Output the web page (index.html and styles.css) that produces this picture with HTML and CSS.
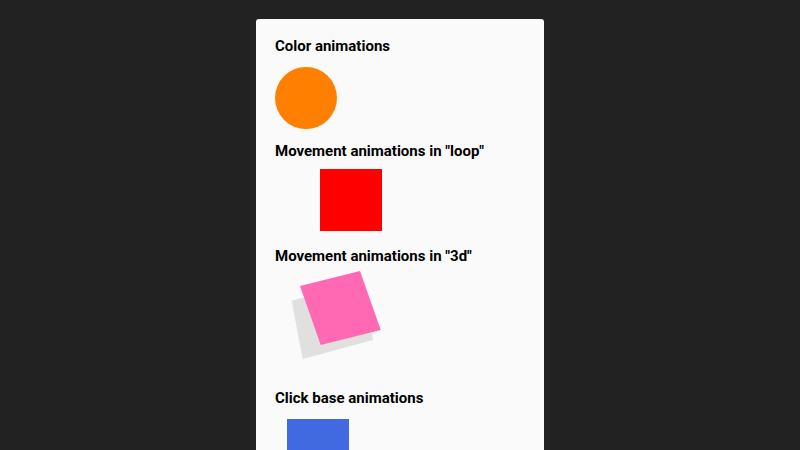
FILE: index.html
```html
<!DOCTYPE html>
<html lang="en">
<head>
<meta charset="utf-8">
<title>Animations</title>
<link rel="stylesheet" href="styles.css">
</head>
<body>
<main class="card">
  <section class="demo">
    <h3 class="title">Color animations</h3>
    <div class="stage">
      <div class="circle"></div>
    </div>
  </section>
  <section class="demo">
    <h3 class="title">Movement animations in "loop"</h3>
    <div class="stage">
      <div class="square red"></div>
    </div>
  </section>
  <section class="demo">
    <h3 class="title">Movement animations in "3d"</h3>
    <div class="stage stage-3d">
      <div class="shadow3d"></div>
      <div class="pink3d"></div>
    </div>
  </section>
  <section class="demo">
    <h3 class="title">Click base animations</h3>
    <div class="stage">
      <div class="square blue"></div>
    </div>
  </section>
</main>
</body>
</html>
```
FILE: styles.css
```css
html, body {
  margin: 0;
  padding: 0;
  background: #222222;
  height: 100%;
  overflow: hidden;
}
body {
  font-family: Roboto, "Liberation Sans", Arial, sans-serif;
  color: #000;
}
.card {
  width: 288px;
  margin: 19px auto 0;
  box-sizing: border-box;
  padding: 18px 19px 40px;
  background: #fafafa;
  border-radius: 3px;
  min-height: 500px;
}
.demo {
  margin-bottom: 13px;
}
.title {
  margin: 0 0 12px;
  font-size: 15px;
  line-height: 18px;
  font-weight: 700;
}
.stage {
  height: 62px;
  position: relative;
}
.circle {
  width: 62px;
  height: 62px;
  border-radius: 50%;
  background: #ff8000;
}
.square {
  width: 62px;
  height: 62px;
}
.red {
  background: #ff0000;
  transform: translate(45px, -3px);
}
.blue {
  background: #4169e1;
  margin-left: 12px;
}
.stage-3d {
  height: 99px;
}
.pink3d, .shadow3d {
  position: absolute;
  left: 0;
  top: 0;
  width: 62px;
  height: 62px;
  transform-origin: 0 0;
}
.shadow3d {
  background: #e0e0e0;
  transform: matrix(1.134, -0.306, 0.177, 0.94, 16.7, 23.7);
}
.pink3d {
  background: #ff69b4;
  transform: matrix(0.968, -0.242, 0.334, 0.952, 25, 9);
}
```
